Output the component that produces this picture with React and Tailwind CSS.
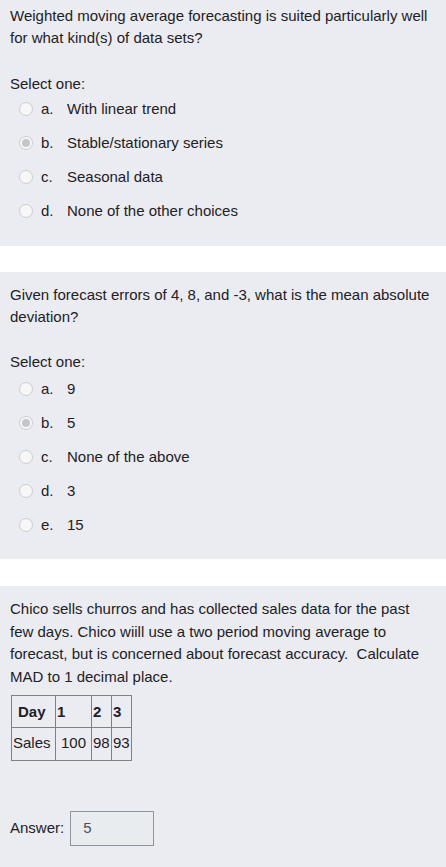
const Radio = ({ checked }) => (
    <span className="w-[14px] h-[14px] rounded-full border border-[#cbcdd2] bg-[#f7f7f8] flex items-center justify-center shrink-0">
        {checked && <span className="w-[8px] h-[8px] rounded-full bg-[#c4c6ca]" />}
    </span>
);

const Options = ({ items, selected, className = '' }) => (
    <div className={`flex flex-col ${className}`}>
        {items.map((text, i) => (
            <div key={i} className="h-[34px] flex items-center pl-[9px]">
                <Radio checked={i === selected} />
                <span className="ml-[8px] w-[26px]">{'abcde'[i]}.</span>
                <span>{text}</span>
            </div>
        ))}
    </div>
);

export default function App() {
    return (
        <div
            className="bg-white text-[#1d2125] text-[15px] min-h-[867px]"
            style={{ fontFamily: '"Liberation Sans", Arial, sans-serif' }}
        >
            {/* Question 1 */}
            <div className="bg-[#ebecf1] px-[10px] pt-[5px] pb-[18px]">
                <p className="leading-[22px]">
                    Weighted moving average forecasting is suited particularly well for what kind(s) of data sets?
                </p>
                <div className="mt-[27px] leading-[16px]">Select one:</div>
                <Options
                    items={['With linear trend', 'Stable/stationary series', 'Seasonal data', 'None of the other choices']}
                    selected={1}
                />
            </div>

            <div className="h-[26px]" />

            {/* Question 2 */}
            <div className="bg-[#ebecf1] px-[10px] pt-[12px] pb-[17px]">
                <p className="leading-[22px]">
                    Given forecast errors of 4, 8, and -3, what is the mean absolute deviation?
                </p>
                <div className="mt-[26px] leading-[16px]">Select one:</div>
                <Options items={['9', '5', 'None of the above', '3', '15']} selected={1} className="mt-[2px]" />
            </div>

            <div className="h-[27px]" />

            {/* Question 3 */}
            <div className="bg-[#ebecf1] px-[10px] pt-[12px] pb-[22px]">
                <p className="leading-[22.5px]">
                    Chico sells churros and has collected sales data for the past few days. Chico wiill use a two period moving average to forecast, but is concerned about forecast accuracy.&nbsp; Calculate MAD to 1 decimal place.
                </p>
                <table className="mt-[7px] ml-[1px] border-collapse table-fixed w-[120px] text-[15px]">
                    <tbody>
                        <tr className="h-[32px] font-bold">
                            <td className="w-[44px] border border-[#808080] align-top pt-[5px] pl-[6px]">Day</td>
                            <td className="w-[36px] border border-[#808080] align-top pt-[5px] pl-[1px]">1</td>
                            <td className="w-[20px] border border-[#808080] align-top pt-[5px] pl-[1px]">2</td>
                            <td className="w-[20px] border border-[#808080] align-top pt-[5px] pl-[1px]">3</td>
                        </tr>
                        <tr className="h-[33px]">
                            <td className="border border-[#808080] align-top pt-[4px] pl-[1px]">Sales</td>
                            <td className="border border-[#808080] align-top pt-[4px] text-right pr-[5px]">100</td>
                            <td className="border border-[#808080] align-top pt-[4px] pl-[1px]">98</td>
                            <td className="border border-[#808080] align-top pt-[4px] pl-[1px]">93</td>
                        </tr>
                    </tbody>
                </table>
                <div className="mt-[50px] flex items-center">
                    <span>Answer:</span>
                    <div className="ml-[6px] w-[84px] h-[35px] bg-[#e9ecef] border border-[#8f959e] flex items-center pl-[12px] text-[#495057]">
                        5
                    </div>
                </div>
            </div>
        </div>
    );
}
